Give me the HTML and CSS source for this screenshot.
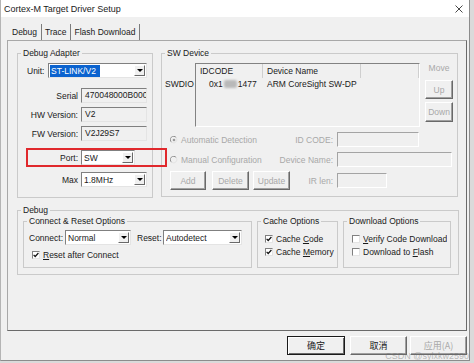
FILE: index.html
```html
<!DOCTYPE html>
<html lang="en">
<head>
    <meta charset="UTF-8">
    <meta name="viewport" content="width=device-width, initial-scale=1.0">
    <title>Cortex-M Target Driver Setup</title>
    <link rel="stylesheet" href="styles.css">
</head>
<body>
    <div class="window">
        <div class="titlebar">
            <span class="title">Cortex-M Target Driver Setup</span>
            <svg class="close" width="8" height="8" viewBox="0 0 8 8"><path d="M0.5 0.5 L7.5 7.5 M7.5 0.5 L0.5 7.5" stroke="#333" stroke-width="0.9" fill="none"/></svg>
        </div>

        <div class="tabs">
            <div class="tab active">Debug</div>
            <div class="tab">Trace</div>
            <div class="tab">Flash Download</div>
        </div>

        <div class="page">
            <div class="top-row">
                <fieldset class="group adapter">
                    <legend>Debug Adapter</legend>
                    <div class="row unit">
                        <span class="unit-label">Unit:</span>
                        <div class="combo combo-unit"><span class="value selected">ST-LINK/V2</span><span class="fill"></span><span class="drop"></span></div>
                    </div>
                    <div class="row field serial">
                        <label>Serial</label>
                        <div class="edit edit-info">470048000B000C3</div>
                    </div>
                    <div class="row field hw">
                        <label>HW Version:</label>
                        <div class="edit edit-info">V2</div>
                    </div>
                    <div class="row field fw">
                        <label>FW Version:</label>
                        <div class="edit edit-info">V2J29S7</div>
                    </div>
                    <div class="row field port">
                        <label>Port:</label>
                        <div class="combo combo-port"><span class="value">SW</span><span class="drop"></span></div>
                    </div>
                    <div class="row field max">
                        <label>Max</label>
                        <div class="combo combo-max"><span class="value">1.8MHz</span><span class="drop"></span></div>
                    </div>
                </fieldset>

                <fieldset class="group sw">
                    <legend>SW Device</legend>
                    <div class="sw-top">
                        <div class="swdio">SWDIO</div>
                        <div class="list">
                            <div class="list-head">
                                <span class="col-id">IDCODE</span>
                                <span class="col-name">Device Name</span>
                                <span class="col-extra"></span>
                            </div>
                            <div class="list-row">
                                <span class="col-id id-cell">0x1<i class="redact"></i>1477</span>
                                <span class="col-name">ARM CoreSight SW-DP</span>
                            </div>
                        </div>
                        <div class="move">
                            <div class="move-label">Move</div>
                            <div class="btn off up">Up</div>
                            <div class="btn off down">Down</div>
                        </div>
                    </div>

                    <div class="sw-row row-a">
                        <div class="opt">
                            <svg width="8" height="8" viewBox="0 0 8 8"><path d="M6.3 1.7 A3.3 3.3 0 1 0 1.7 6.3" stroke="#8f8f8f" stroke-width="1" fill="none"/><path d="M6.3 1.7 A3.3 3.3 0 0 1 1.7 6.3" stroke="#e4e4e4" stroke-width="1" fill="none"/><circle cx="4" cy="4" r="1.3" fill="#9a9a9a"/></svg>
                            <span>Automatic Detection</span>
                        </div>
                        <div class="flabel">ID CODE:</div>
                        <div class="edit off edit-id"></div>
                    </div>
                    <div class="sw-row row-b">
                        <div class="opt">
                            <svg width="8" height="8" viewBox="0 0 8 8"><path d="M6.3 1.7 A3.3 3.3 0 1 0 1.7 6.3" stroke="#8f8f8f" stroke-width="1" fill="none"/><path d="M6.3 1.7 A3.3 3.3 0 0 1 1.7 6.3" stroke="#e4e4e4" stroke-width="1" fill="none"/></svg>
                            <span>Manual Configuration</span>
                        </div>
                        <div class="flabel">Device Name:</div>
                        <div class="edit off edit-name"></div>
                    </div>
                    <div class="sw-row row-c">
                        <div class="opt">
                            <div class="btn off add">Add</div>
                            <div class="btn off delete">Delete</div>
                            <div class="btn off update">Update</div>
                        </div>
                        <div class="flabel">IR len:</div>
                        <div class="edit off edit-ir"></div>
                    </div>
                </fieldset>
            </div>

            <fieldset class="group debug">
                <legend>Debug</legend>
                <div class="debug-row">
                    <fieldset class="group connect">
                        <legend>Connect &amp; Reset Options</legend>
                        <div class="conn-row">
                            <span class="lbl-connect">Connect:</span>
                            <div class="combo combo-connect"><span class="value">Normal</span><span class="drop"></span></div>
                            <span class="lbl-reset">Reset:</span>
                            <div class="combo combo-reset"><span class="value">Autodetect</span><span class="drop"></span></div>
                        </div>
                        <div class="check-row">
                            <span class="box"><svg width="6" height="6" viewBox="0 0 6 6"><path d="M0.6 2.8 L2.2 4.5 L5.4 1" stroke="#111" stroke-width="1.2" fill="none"/></svg></span>
                            <span><u>R</u>eset after Connect</span>
                        </div>
                    </fieldset>

                    <fieldset class="group cache">
                        <legend>Cache Options</legend>
                        <div class="check-list">
                            <div class="check">
                                <span class="box"><svg width="6" height="6" viewBox="0 0 6 6"><path d="M0.6 2.8 L2.2 4.5 L5.4 1" stroke="#111" stroke-width="1.2" fill="none"/></svg></span>
                                <span>Cache <u>C</u>ode</span>
                            </div>
                            <div class="check">
                                <span class="box"><svg width="6" height="6" viewBox="0 0 6 6"><path d="M0.6 2.8 L2.2 4.5 L5.4 1" stroke="#111" stroke-width="1.2" fill="none"/></svg></span>
                                <span>Cache <u>M</u>emory</span>
                            </div>
                        </div>
                    </fieldset>

                    <fieldset class="group download">
                        <legend>Download Options</legend>
                        <div class="check-list">
                            <div class="check">
                                <span class="box"></span>
                                <span class="clip"><u>V</u>erify Code Download</span>
                            </div>
                            <div class="check">
                                <span class="box"></span>
                                <span>Download to <u>F</u>lash</span>
                            </div>
                        </div>
                    </fieldset>
                </div>
            </fieldset>
        </div>

        <div class="footer">
            <div class="btn dlg default">确定</div>
            <div class="btn dlg cancel">取消</div>
            <div class="btn dlg off">应用(A)</div>
        </div>

        <div class="mark"></div>
        <div class="watermark">CSDN @sylxkw2590</div>
    </div>
</body>
</html>
```

FILE: styles.css
```css
* {
    box-sizing: border-box;
}

body {
    margin: 0;
    background: #dadada;
    font-family: "Liberation Sans", Arial, sans-serif;
    font-size: 8.5px;
    color: #1a1a1a;
}

.window {
    position: relative;
    width: 470px;
    height: 361px;
    background: #f0f0f0;
    border-left: 1px solid #b4b4b4;
    border-right: 1px solid #8c8c8c;
    border-bottom: 1px solid #8c8c8c;
    overflow: hidden;
}

.titlebar {
    display: flex;
    align-items: center;
    height: 17px;
    padding: 0 6px 0 3px;
    background: #fff;
    font-size: 9px;
}

.close {
    margin-left: auto;
}

/* tabs */
.tabs {
    display: flex;
    height: 19px;
    margin-left: 6px;
    margin-top: 4px;
}

.tab {
    height: 16px;
    margin-top: 3px;
    padding: 0 4px 0 3px;
    line-height: 16px;
    border-right: 1px solid #7c7c7c;
}

.tab.active {
    padding-left: 5px;
}

.page {
    width: 460px;
    height: 291px;
    margin-left: 6px;
    padding: 7px 0 0 9px;
    border: 1px solid #a8a8a8;
    border-right-color: #6a6a6a;
    border-bottom-color: #6a6a6a;
}

/* group boxes */
.group {
    margin: 0;
    padding: 0;
    min-width: 0;
    border: 1px solid #cacaca;
}

.group legend {
    height: 10px;
    margin-left: 3px;
    padding: 0 2px;
    line-height: 10px;
}

.top-row {
    display: flex;
    gap: 8px;
}

.adapter {
    width: 136px;
    height: 150px;
}

.sw {
    width: 297px;
    height: 149px;
}

/* common controls */
.row {
    display: flex;
    align-items: center;
    height: 15px;
}

.edit {
    height: 15px;
    padding-left: 3px;
    line-height: 13px;
    border: 1px solid;
    border-color: #808080 #e4e4e4 #e4e4e4 #808080;
    white-space: nowrap;
    overflow: hidden;
}

.edit.off {
    border-color: #a4a4a4 #fff #fff #a4a4a4;
}

.combo {
    display: flex;
    align-items: center;
    height: 15px;
    padding: 0 1px 0 2px;
    background: #fff;
    border: 1px solid;
    border-color: #808080 #e4e4e4 #e4e4e4 #808080;
}

.combo .value {
    flex: 1;
    line-height: 12px;
    white-space: nowrap;
    overflow: hidden;
}

.combo .value.selected {
    flex: none;
    padding: 0 4px 0 1px;
    margin-left: -1px;
    background: #0b63cf;
    color: #fff;
}

.combo .fill {
    flex: 1;
}

.drop {
    display: flex;
    align-items: center;
    justify-content: center;
    width: 11px;
    height: 11px;
    background: #f0f0f0;
    border: 1px solid;
    border-color: #fff #696969 #696969 #fff;
}

.drop::before {
    content: "";
    border-left: 3px solid transparent;
    border-right: 3px solid transparent;
    border-top: 3px solid #000;
}

.btn {
    display: flex;
    align-items: center;
    justify-content: center;
    background: #f0f0f0;
    border: 1px solid;
    border-color: #fff #696969 #696969 #fff;
    box-shadow: inset -1px -1px #a0a0a0;
}

.btn.off {
    color: #a8a8a8;
}

/* debug adapter */
.unit {
    margin-top: 5px;
    padding-left: 9px;
}

.unit-label {
    width: 21px;
}

.combo-unit {
    width: 99px;
}

.field label {
    width: 60px;
    margin-right: 3px;
    text-align: right;
}

.edit-info {
    width: 66px;
}

.combo-port {
    width: 54px;
}

.combo-max {
    width: 66px;
}

.serial { margin-top: 10px; }
.hw, .fw { margin-top: 4px; }
.port { margin-top: 9px; }
.max { margin-top: 7px; }

/* sw device */
.sw-top {
    display: flex;
    margin-top: 5px;
    padding-left: 3px;
}

.swdio {
    width: 30px;
    padding-top: 16px;
    line-height: 10px;
}

.list {
    width: 225px;
    height: 64px;
    border: 1px solid;
    border-color: #828282 #fff #fff #828282;
}

.list-head {
    display: flex;
    height: 14px;
    line-height: 14px;
}

.list-head span {
    border-right: 1px solid #cfcfcf;
    padding-left: 4px;
}

.col-id { width: 67px; }
.col-name { width: 98px; }
.col-extra { width: 58px; }

.list-row {
    display: flex;
    line-height: 12px;
}

.list-row span {
    padding-left: 4px;
}

.list-row .id-cell {
    padding-left: 13px;
}

.redact {
    display: inline-block;
    width: 13px;
    height: 8px;
    margin: 0 1px;
    vertical-align: -1px;
    background: #b9b9b9;
    border-radius: 2px;
    filter: blur(1px);
}

.move {
    display: flex;
    flex-direction: column;
    width: 28px;
    margin-left: 5px;
}

.move-label {
    height: 17px;
    line-height: 10px;
    text-align: center;
    color: #a8a8a8;
}

.up {
    height: 19px;
}

.down {
    height: 20px;
    margin-top: 3px;
}

.sw-row {
    display: flex;
    align-items: center;
    padding-left: 8px;
}

.row-a {
    height: 15px;
    margin-top: 5px;
}

.row-b {
    height: 15px;
    margin-top: 5px;
}

.row-c {
    height: 19px;
    margin-top: 4px;
}

.opt {
    display: flex;
    align-items: center;
    width: 120px;
    color: #a8a8a8;
}

.opt svg {
    margin-right: 3px;
}

.flabel {
    display: flex;
    justify-content: flex-end;
    width: 43px;
    margin-right: 4px;
    white-space: nowrap;
    color: #a8a8a8;
}

.edit-id { width: 82px; }
.edit-name { width: 115px; }
.edit-ir { width: 50px; }

.add {
    width: 36px;
    height: 19px;
}

.delete {
    width: 37px;
    height: 19px;
    margin-left: 6px;
}

.update {
    width: 37px;
    height: 19px;
    margin-left: 4px;
}

/* debug options */
.debug {
    width: 442px;
    height: 70px;
    margin-top: 7px;
}

.debug-row {
    display: flex;
    gap: 5px;
    margin-top: 1px;
    padding-left: 5px;
}

.connect {
    width: 229px;
    height: 52px;
}

.cache {
    width: 81px;
    height: 52px;
}

.download {
    width: 108px;
    height: 52px;
    overflow: hidden;
}

.conn-row {
    display: flex;
    align-items: center;
    height: 15px;
    margin-top: 4px;
    padding-left: 5px;
}

.lbl-connect {
    width: 36px;
}

.combo-connect {
    width: 66px;
}

.lbl-reset {
    width: 26px;
    margin-left: 6px;
}

.combo-reset {
    width: 79px;
}

.check-row {
    display: flex;
    align-items: center;
    height: 12px;
    margin-top: 4px;
    padding-left: 8px;
}

.check-list {
    margin-top: 6px;
    padding-left: 7px;
}

.download .check-list {
    padding-left: 8px;
}

.check {
    display: flex;
    align-items: center;
    height: 13px;
}

.box {
    display: flex;
    align-items: center;
    justify-content: center;
    width: 8px;
    height: 8px;
    margin-right: 3px;
    background: #fff;
    border: 1px solid;
    border-color: #808080 #e4e4e4 #e4e4e4 #808080;
}

.clip {
    width: 84px;
    white-space: nowrap;
    overflow: hidden;
}

/* dialog buttons */
.footer {
    display: flex;
    justify-content: flex-end;
    margin-top: 5px;
    padding-right: 2px;
}

.dlg {
    width: 57px;
    height: 19px;
    font-family: "Noto Sans CJK SC", sans-serif;
    font-size: 9px;
}

.dlg.default {
    width: 58px;
    margin-right: 5px;
    border-color: #1a1a1a;
    box-shadow: inset 1px 1px #fff, inset -1px -1px #696969;
}

.dlg.cancel {
    margin-right: 3px;
}

.mark {
    position: absolute;
    left: 25px;
    top: 148px;
    width: 141px;
    height: 19px;
    border: 2px solid #e0282c;
}

.watermark {
    position: absolute;
    right: 0;
    bottom: -1px;
    font-size: 9px;
    color: rgba(110, 110, 110, 0.45);
}
```
